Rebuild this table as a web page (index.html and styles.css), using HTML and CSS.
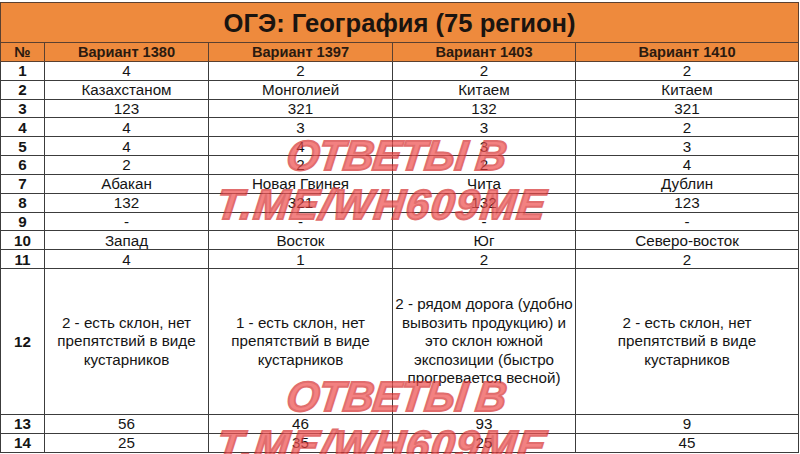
FILE: index.html
```html
<!DOCTYPE html>
<html lang="ru">
<head>
<meta charset="utf-8">
<title>ОГЭ: География (75 регион)</title>
<link rel="stylesheet" href="styles.css">
</head>
<body>
<div class="sheet">
  <table class="answers">
    <colgroup>
      <col class="c-num"><col class="c-v1"><col class="c-v2"><col class="c-v3"><col class="c-v4">
    </colgroup>
    <thead>
      <tr class="title-row"><th colspan="5">ОГЭ: География (75 регион)</th></tr>
      <tr class="head-row"><th>№</th><th>Вариант 1380</th><th>Вариант 1397</th><th>Вариант 1403</th><th>Вариант 1410</th></tr>
    </thead>
    <tbody>
      <tr><th>1</th><td>4</td><td>2</td><td>2</td><td>2</td></tr>
      <tr><th>2</th><td>Казахстаном</td><td>Монголией</td><td>Китаем</td><td>Китаем</td></tr>
      <tr><th>3</th><td>123</td><td>321</td><td>132</td><td>321</td></tr>
      <tr><th>4</th><td>4</td><td>3</td><td>3</td><td>2</td></tr>
      <tr><th>5</th><td>4</td><td>4</td><td>3</td><td>3</td></tr>
      <tr><th>6</th><td>2</td><td>2</td><td>2</td><td>4</td></tr>
      <tr><th>7</th><td>Абакан</td><td>Новая Гвинея</td><td>Чита</td><td>Дублин</td></tr>
      <tr><th>8</th><td>132</td><td>321</td><td>132</td><td>123</td></tr>
      <tr><th>9</th><td>-</td><td>-</td><td>-</td><td>-</td></tr>
      <tr><th>10</th><td>Запад</td><td>Восток</td><td>Юг</td><td>Северо-восток</td></tr>
      <tr><th>11</th><td>4</td><td>1</td><td>2</td><td>2</td></tr>
      <tr class="tall"><th>12</th>
        <td>2 - есть склон, нет<br>препятствий в виде<br>кустарников</td>
        <td>1 - есть склон, нет<br>препятствий в виде<br>кустарников</td>
        <td>2 - рядом дорога (удобно<br>вывозить продукцию) и<br>это склон южной<br>экспозиции (быстро<br>прогревается весной)</td>
        <td>2 - есть склон, нет<br>препятствий в виде<br>кустарников</td>
      </tr>
      <tr><th>13</th><td>56</td><td>46</td><td>93</td><td>9</td></tr>
      <tr><th>14</th><td>25</td><td>35</td><td>25</td><td>45</td></tr>
    </tbody>
  </table>
  <div class="wm wm-top"><span class="wm-l1">ОТВЕТЫ В</span><span class="wm-l2">T.ME/WH609ME</span></div>
  <div class="wm wm-bottom"><span class="wm-l1">ОТВЕТЫ В</span><span class="wm-l2">T.ME/WH609ME</span></div>
</div>
</body>
</html>
```

FILE: styles.css
```css
html, body {
  margin: 0;
  padding: 0;
  background: #ffffff;
}
body {
  overflow: hidden;
  width: 800px;
  height: 454px;
}
.sheet {
  position: relative;
  padding-top: 2px;
  width: 800px;
  height: 452px;
  font-family: "Liberation Sans", Arial, sans-serif;
  color: #151515;
}
.answers {
  border-collapse: collapse;
  table-layout: fixed;
  width: 798px;
}
.c-num { width: 44px; }
.c-v1 { width: 164px; }
.c-v2 { width: 184px; }
.c-v3 { width: 183px; }
.c-v4 { width: 223px; }

.answers th,
.answers td {
  border: 1px solid #3c3c3c;
  padding: 0;
  text-align: center;
  vertical-align: middle;
  white-space: nowrap;
  font-size: 15.2px;
  line-height: 17px;
}
.answers tbody th {
  font-weight: bold;
}
.answers tbody td {
  font-weight: normal;
}
.answers tbody tr {
  height: 18.82px;
}
.title-row th {
  background: #ee8a3d;
  height: 39px;
  font-size: 25.6px;
  line-height: 28px;
  font-weight: bold;
  color: #1a1410;
  border-color: #5a4030;
}
.head-row th {
  background: #ee8a3d;
  height: 18px;
  font-size: 14.6px;
  font-weight: bold;
  color: #2a1a10;
  border-color: #5a4030;
}
.answers tbody tr.tall {
  height: 146px;
}
.tall td {
  line-height: 18.5px;
}

.wm {
  position: absolute;
  display: flex;
  flex-direction: column;
  font-family: "Liberation Sans", Arial, sans-serif;
  font-weight: bold;
  font-style: italic;
  font-size: 42px;
  line-height: 49px;
  color: #ef5252;
  -webkit-text-stroke: 2px #d63636;
  opacity: 0.72;
  pointer-events: none;
  white-space: nowrap;
  transform: skewX(-7deg);
}
.wm-l1 {
  margin-left: 64px;
  letter-spacing: -0.8px;
  word-spacing: -1px;
}
.wm-l2 {
  letter-spacing: 1.5px;
}
.wm-top {
  left: 220px;
  top: 131px;
}
.wm-bottom {
  left: 220px;
  top: 372px;
}
```
